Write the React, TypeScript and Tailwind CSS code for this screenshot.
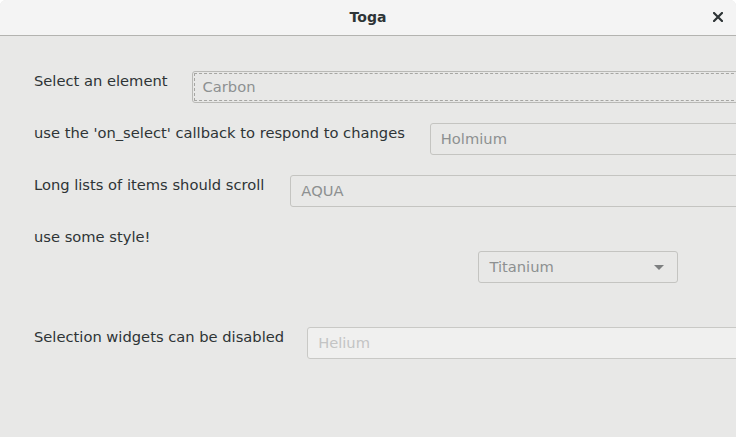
import React from 'react';

const font = { fontFamily: '"DejaVu Sans", "Noto Sans", sans-serif' };

function Box({ text, className = '' }: { text: string; className?: string }) {
  return (
    <div
      className={`h-[32px] flex-1 min-w-0 -mr-[10px] rounded-[3px] border border-[#c4c4c1] flex items-center pl-[10px] pt-[1px] text-[#8d9091] ${className}`}
    >
      {text}
    </div>
  );
}

export default function App() {
  return (
    <div className="w-[736px] h-[437px] bg-white overflow-hidden" style={font}>
      <div className="w-full h-full rounded-t-[6px] overflow-hidden bg-[#e8e8e7] flex flex-col">
        {/* title bar */}
        <div className="h-[36px] shrink-0 bg-[#f4f4f4] border-b border-[#b3b3b0] flex items-center relative">
          <span className="mx-auto text-[14px] font-bold text-[#2e3436]">Toga</span>
          <svg className="absolute right-[13px] top-[12px]" width="10" height="10" viewBox="0 0 10 10">
            <path d="M1 1 L9 9 M9 1 L1 9" stroke="#2e3436" strokeWidth="2.2" strokeLinecap="square" />
          </svg>
        </div>

        {/* body */}
        <div className="flex flex-col pt-[35px] pl-[34px] text-[14.7px] text-[#2e3436]">
          <div className="flex items-start h-[31px]">
            <span className="mr-[24px] leading-[17px] pt-[1px]">Select an element</span>
            <div className="h-[32px] flex-1 min-w-0 -mr-[10px] rounded-[3px] border border-[#b9b9b6] flex items-center pl-[10px] pt-[1px] text-[#8d9091] outline-1 outline-dashed outline-offset-[-3px] outline-[#a6a6a3]">
              Carbon
            </div>
          </div>

          <div className="flex items-start mt-[21px] h-[32px]">
            <span className="mr-[25px] leading-[17px] pt-[1px]">use the 'on_select' callback to respond to changes</span>
            <Box text="Holmium" />
          </div>

          <div className="flex items-start mt-[20px] h-[32px]">
            <span className="mr-[26px] leading-[17px] pt-[1px]">Long lists of items should scroll</span>
            <Box text="AQUA" className="uppercase" />
          </div>

          <div className="flex items-start mt-[20px] h-[80px]">
            <span className="leading-[17px] pt-[1px]">use some style!</span>
            <div className="ml-[328px] mt-[24px] w-[200px] h-[32px] rounded-[3px] border border-[#c4c4c1] flex items-center pl-[10px] pr-[13px] pt-[1px] text-[#8d9091]">
              <span className="flex-1">Titanium</span>
              <svg width="10" height="6" viewBox="0 0 10 6">
                <path d="M0 0 L10 0 L5 5 Z" fill="#7d7f80" />
              </svg>
            </div>
          </div>

          <div className="flex items-start mt-[20px] h-[32px]">
            <span className="mr-[23px] leading-[17px] pt-[1px]">Selection widgets can be disabled</span>
            <Box text="Helium" className="bg-[#f0f0ef] !text-[#c3c4c4] border-[#c9c9c6]" />
          </div>
        </div>
      </div>
    </div>
  );
}
